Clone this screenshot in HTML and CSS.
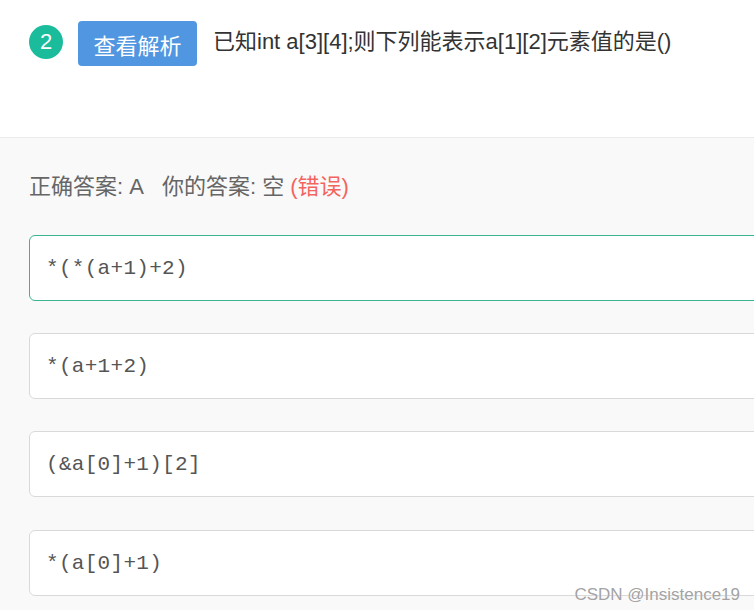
FILE: index.html
```html
<!DOCTYPE html>
<html lang="zh-CN">
<head>
<meta charset="utf-8">
<title>题目解析</title>
<link rel="stylesheet" href="styles.css">
</head>
<body>
<div class="page">
  <header class="question">
    <span class="num">2</span>
    <button class="analyze" type="button">查看解析</button>
    <span class="title">已知int a[3][4];则下列能表示a[1][2]元素值的是()</span>
  </header>
  <main class="answers">
    <div class="result">
      <span class="right">正确答案: A</span>
      <span class="mine">你的答案: 空 <span class="wrong">(错误)</span></span>
    </div>
    <ul class="options">
      <li class="option correct">*(*(a+1)+2)</li>
      <li class="option">*(a+1+2)</li>
      <li class="option">(&amp;a[0]+1)[2]</li>
      <li class="option">*(a[0]+1)</li>
    </ul>
    <div class="watermark">CSDN @Insistence19</div>
  </main>
</div>
</body>
</html>
```

FILE: styles.css
```css
html, body {
  margin: 0;
  padding: 0;
  height: 100%;
}
body {
  font-family: "Liberation Sans", Arial, "Noto Sans CJK SC", sans-serif;
  background: #f9f9f9;
  overflow: hidden;
}
.page {
  min-height: 100vh;
  display: flex;
  flex-direction: column;
}
.question {
  height: 138px;
  box-sizing: border-box;
  background: #fff;
  border-bottom: 1px solid #ebebeb;
  display: flex;
  align-items: flex-start;
  padding: 21px 0 0 29px;
}
.num {
  width: 34px;
  height: 34px;
  margin-top: 4px;
  border-radius: 50%;
  background: #1abc9c;
  color: #fff;
  font-size: 22px;
  line-height: 34px;
  text-align: center;
  margin-right: 15px;
}
.analyze {
  width: 119px;
  height: 45px;
  border: none;
  border-radius: 4px;
  background: #5096e0;
  color: #fff;
  font-family: "Liberation Sans", "Noto Sans CJK SC", sans-serif;
  font-size: 22px;
  padding: 0;
  margin-right: 16px;
}
.title {
  color: #333;
  font-size: 22px;
  line-height: 42px;
}
.answers {
  flex: 1;
  position: relative;
  background: #f9f9f9;
  padding: 34px 0 0 29px;
}
.result {
  font-size: 22px;
  line-height: 30px;
  color: #666;
  display: flex;
  gap: 18px;
}
.wrong {
  color: #f4645f;
}
.options {
  list-style: none;
  margin: 33px -30px 0 0;
  padding: 0;
  display: flex;
  flex-direction: column;
  gap: 32px;
}
.option {
  height: 66px;
  box-sizing: border-box;
  border: 1px solid #d9d9d9;
  border-radius: 6px;
  background: #fff;
  display: flex;
  align-items: center;
  padding-left: 16px;
  font-family: "Liberation Mono", "Courier New", monospace;
  font-size: 21px;
  letter-spacing: 0.3px;
  color: #555;
}
.option:last-child {
  margin-top: 1px;
}
.option.correct {
  border-color: #3ab594;
}
.watermark {
  position: absolute;
  right: 14px;
  bottom: 5px;
  font-size: 17px;
  line-height: 20px;
  color: #a3a3a3;
  text-shadow: 0 0 1px #fff;
}
```
